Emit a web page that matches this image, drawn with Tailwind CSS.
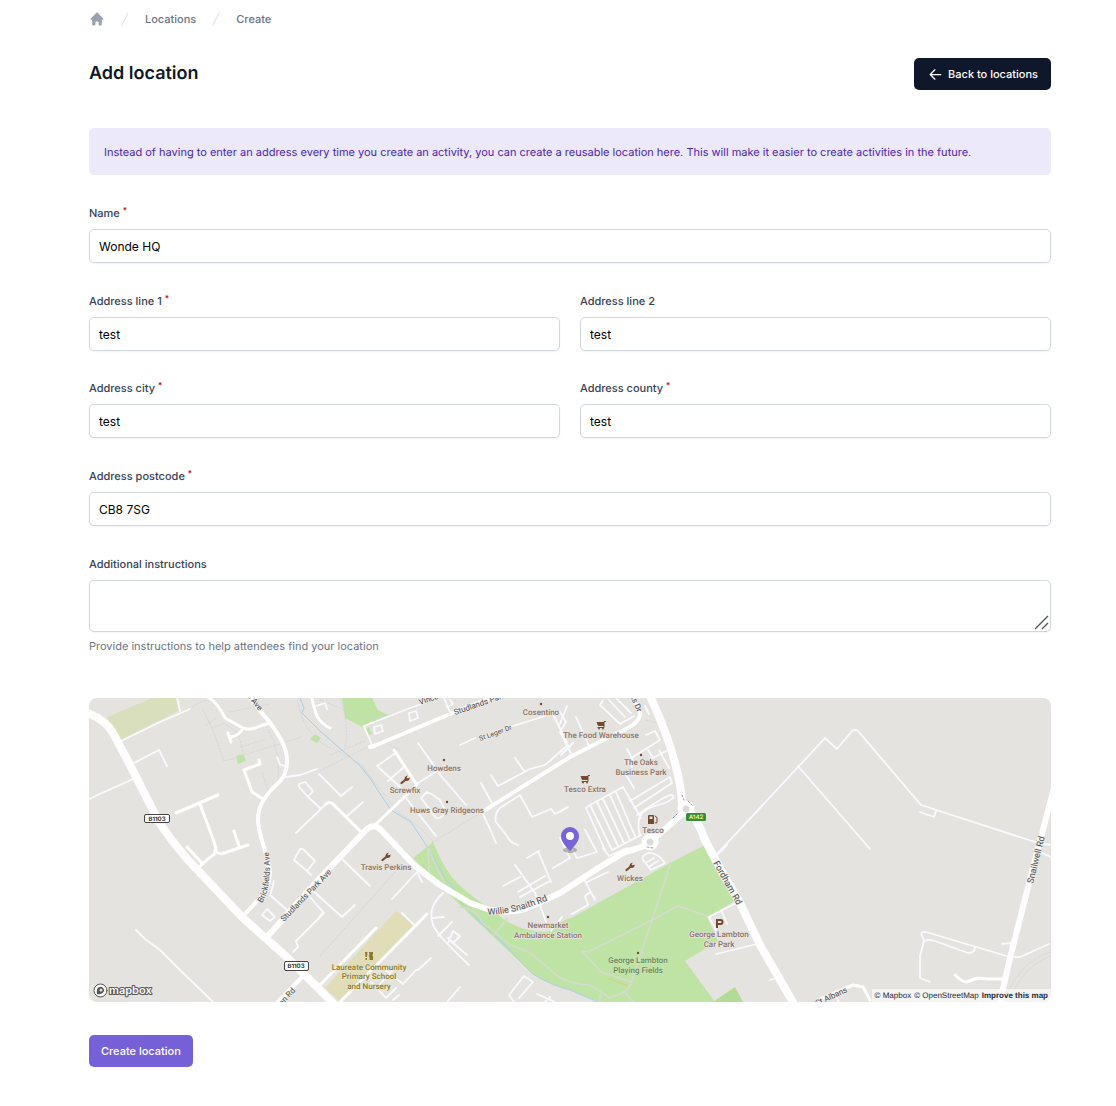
<!DOCTYPE html>
<html lang="en">
<head>
  <meta charset="UTF-8" />
  <meta name="viewport" content="width=device-width, initial-scale=1.0"/>
  <title>Add location</title>
  <script src="https://cdn.jsdelivr.net/npm/@tailwindcss/browser@4"></script>
</head>
<body class="bg-white font-['Inter',sans-serif] text-[11px] leading-4 text-gray-700 antialiased [text-rendering:geometricPrecision]">

  <main class="ml-[89px] mr-[65px] pt-[11px] pb-10">

    <!-- Breadcrumbs -->
    <nav aria-label="Breadcrumb">
      <ol class="flex items-center gap-3 font-medium text-gray-500">
        <li>
          <a href="#" aria-label="Home" class="block text-gray-400">
            <svg class="size-4" viewBox="0 0 20 20" fill="currentColor"><path fill-rule="evenodd" clip-rule="evenodd" d="M9.293 2.293a1 1 0 011.414 0l7 7A1 1 0 0117 11h-1v6a1 1 0 01-1 1h-2a1 1 0 01-1-1v-3a1 1 0 00-1-1H9a1 1 0 00-1 1v3a1 1 0 01-1 1H5a1 1 0 01-1-1v-6H3a1 1 0 01-.707-1.707l7-7z"/></svg>
          </a>
        </li>
        <li class="flex items-center gap-3">
          <svg class="size-4 text-gray-300" viewBox="0 0 20 20" fill="currentColor"><path d="M5.555 17.776l8-16 .894.448-8 16-.894-.448z"/></svg>
          <a href="#">Locations</a>
        </li>
        <li class="flex items-center gap-3">
          <svg class="size-4 text-gray-300" viewBox="0 0 20 20" fill="currentColor"><path d="M5.555 17.776l8-16 .894.448-8 16-.894-.448z"/></svg>
          <a href="#">Create</a>
        </li>
      </ol>
    </nav>

    <!-- Heading -->
    <header class="mt-[31px] flex items-center justify-between">
      <h1 class="text-lg font-semibold text-gray-900">Add location</h1>
      <a href="#" class="flex h-8 items-center gap-[5px] rounded-[5px] bg-[#0f172a] pl-[14px] pr-[13px] font-medium text-white">
        <svg class="size-[15px]" viewBox="0 0 24 24" fill="none" stroke="currentColor" stroke-width="2" stroke-linecap="round" stroke-linejoin="round"><path d="M11 19.500L3.500 12L11 4.500M3.500 12H20.500"/></svg>
        Back to locations
      </a>
    </header>

    <p class="mt-[38px] rounded-[5px] bg-[#ece9fa] px-[15px] pt-[17px] pb-[15px] leading-[15px] text-[#4c25b0]">
      Instead of having to enter an address every time you create an activity, you can create a reusable location here. This will make it easier to create activities in the future.
    </p>

    <form class="mt-[30px]">
      <div class="space-y-[30px]">
        <div>
          <label for="name" class="block font-medium">Name <sup class="text-red-700">*</sup></label>
          <input id="name" type="text" value="Wonde HQ" class="mt-2 h-[34px] w-full rounded-[5px] border border-gray-300 px-[9px] text-xs text-black shadow-xs">
        </div>

        <div class="grid grid-cols-2 gap-x-5 gap-y-[29px]">
          <div>
            <label for="line1" class="block font-medium">Address line 1 <sup class="text-red-700">*</sup></label>
            <input id="line1" type="text" value="test" class="mt-2 h-[34px] w-full rounded-[5px] border border-gray-300 px-[9px] text-xs text-black shadow-xs">
          </div>
          <div>
            <label for="line2" class="block font-medium">Address line 2</label>
            <input id="line2" type="text" value="test" class="mt-2 h-[34px] w-full rounded-[5px] border border-gray-300 px-[9px] text-xs text-black shadow-xs">
          </div>
          <div>
            <label for="city" class="block font-medium">Address city <sup class="text-red-700">*</sup></label>
            <input id="city" type="text" value="test" class="mt-2 h-[34px] w-full rounded-[5px] border border-gray-300 px-[9px] text-xs text-black shadow-xs">
          </div>
          <div>
            <label for="county" class="block font-medium">Address county <sup class="text-red-700">*</sup></label>
            <input id="county" type="text" value="test" class="mt-2 h-[34px] w-full rounded-[5px] border border-gray-300 px-[9px] text-xs text-black shadow-xs">
          </div>
        </div>

        <div>
          <label for="postcode" class="block font-medium">Address postcode <sup class="text-red-700">*</sup></label>
          <input id="postcode" type="text" value="CB8 7SG" class="mt-2 h-[34px] w-full rounded-[5px] border border-gray-300 px-[9px] text-xs text-black shadow-xs">
        </div>

        <div>
          <label for="instructions" class="block font-medium">Additional instructions</label>
          <div class="relative mt-2">
            <textarea id="instructions" class="block h-[52px] w-full resize-none rounded-[5px] border border-gray-300 px-[9px] py-2 text-xs text-black shadow-xs"></textarea>
            <svg class="pointer-events-none absolute right-0.5 bottom-0.5 size-[15px]" viewBox="0 0 15 15" stroke="#555" stroke-width="1.4"><path d="M1 14L14 1M8 14l6-6"/></svg>
          </div>
          <p class="mt-[6px] text-gray-500">Provide instructions to help attendees find your location</p>
        </div>
      </div>

      <!-- Map -->
      <div class="relative mt-11 overflow-hidden rounded-lg bg-[#e4e3df]">
        <svg class="block w-full" viewBox="89 698 962 304" fill="none" stroke-linejoin="round" stroke-linecap="round">
          <!-- Parks and school grounds -->
          <g>
            <path fill="#d9dfbc" d="M107 717L152 698H177L180 710L118 741Z"/>
            <path fill="#e2ddb9" d="M325 988L396 911L414 925L341 1002Z"/>
            <path fill="#bfe3a5" d="M342 698H372L378 710L388 715L362 727L345 718ZM236 756L243 754L246 761L238 764ZM310 739L315 734L321 738L317 743ZM365 729l4-2 3 7-4 1Z"/>
            <path fill="#bfe3a5" d="M433 842Q441 862 451 876Q461 889 485 905L506 921Q527 933 548 932Q558 922 573 917L670 863L705 845L735 901L707 917L718 941L685 961L715 1002H600L570 990Q545 982 533 974L500 943L461 906L413 858Z"/>
            <path fill="#b2db97" d="M713 1002L735 987L743 1002Z"/>
          </g>

          <!-- River -->
          <path stroke="#a6d0e8" d="M300 698L304 708L302 713L320 731L350 757Q362 766 370 778Q380 794 391 810L411 822L428 848L445 878L455 890L461 902L480 922L500 940L533 974Q550 985 570 990L598 1002"/>

          <!-- Footpaths -->
          <g stroke="#d3d3d9" stroke-dasharray="1 2">
            <path d="M190 709Q200 700 212 700M203 710L213 730L224 761L235 758M212 728l12-5 14 10 6 22 58-18M240 747l24-7M216 718l-10 7M298 703Q305 740 340 752L362 765Q380 790 398 812Q420 825 433 842M320 771Q350 755 372 745M320 700l50 20 45-12M340 698q10 30 5 48M268 730q12 20 10 50M330 755l35-14M230 712l40-8M380 740l20 10M262 773l8 22M433 842L482 812M320 956L395 872M668 726l-22-6M1003 1000C1018 975 1022 962 1051 952M1007 1000C1022 978 1026 966 1051 956M263 850l-5-32"/>
          </g>
          <g stroke="#d5dbcf" stroke-width="1.6">
            <path d="M670 865L652 920L631 984L625 992L633 1002M582 951L588 952L652 920L678 906L707 916M582 951L601 972L632 982M460 907Q478 910 482 922L510 945Q525 950 533 955L560 978Q572 984 590 985L610 998L625 992M493 936L507 919M600 1002v-8M428 848L429 872M428 848L445 885"/>
          </g>
          <path stroke="#c8d98d" stroke-width="2" d="M609 979L627 985"/>

          <!-- Minor streets -->
          <g stroke="#fafafe" stroke-width="1.8">
            <path d="M177 698L180 711M119 742L160 722L190 709M130 765L159 750L167 766M89 799L133 779M136 930L145 939L160 950L180 970L213 1002M277 757L280 765L286 766M286 777L300 775L317 769"/>
            <path d="M316 706L325 703L327 709M299 787L299 784L305 782L313 791L308 797ZM308 797L320 808M319 774L341 796L352 787M346 817L363 802M296 833L326 804"/>
            <path d="M300 849L303 849L315 861L307 871L294 860ZM307 871l4 4M270 895L287 910M271 893l3-12M262 915L267 909L275 917L270 921ZM308 895L324 913L296 941L298 947L293 952M312 890L342 917L355 905M320 908l3 4-3 4M342 859L370 886M392 899L417 872L422 882M410 860L400 850"/>
            <path d="M364 726L405 710L435 699M364 726L372 745M374 727L381 725L383 731L375 734ZM410 721L409 713L416 711L418 718L410 721M444 698L450 712M450 700l3 4-6 3"/>
            <path d="M460 745L475 738M513 726L545 716M553 714L567 743M567 706L560 724M397 752L377 766L400 787M388 781L404 767M418 783L445 766M427 792L421 798L436 818Q440 820 446 812L440 800L433 795ZM406 798L436 836M418 743L442 777L466 805"/>
            <path d="M482 812L490 829L496 843M481 783L493 805M518 845Q510 843 507 836L496 822Q494 814 500 808L520 795L532 817L551 809L555 814L566 808M491 775L498 786L530 769L545 765L560 752L568 745M515 758L524 771"/>
            <path d="M443 893C430 905 430 915 433 925C438 935 448 945 469 965M432 918L444 917M438 936L452 922M448 943L453 931L460 936L453 943L448 938M453 943L467 955M402 913L414 925M403 984L416 970L418 970L431 958M386 970L403 984M447 1002L460 987M514 1002L509 995L524 976L533 982L519 998M537 994L555 1002M545 1002l5-5M380 984L393 970M371 982L386 998L396 988M393 1000l6-5"/>
            <path d="M515 865L535 893L540 905L546 922M503 886L520 877M518 892L545 876M520 897L550 881M538 851L551 882M527 858l12-7M553 868L570 858L560 838M577 858L570 845M577 858L597 852L585 830M603 848l6 8 18-8M551 931L562 917"/>
            <path d="M583 877L595 900M587 882L608 872M572 914L588 905L585 896L590 892L595 898M643 860Q641 856 648 853Q657 852 665 863L651 870ZM647 862l7-4M650 866l8-5"/>
            <path d="M603 700L600 705L620 724L634 716M609 700L625 717M616 698L631 713M560 712L566 722L560 732L573 757M576 717L590 748M561 755l12-12M646 735L655 731L660 740L628 760L632 767M627 749L634 762M648 750L653 758L668 750M659 750L669 768M645 706l4 8M626 775l8 13"/>
            <path d="M641 835L612 850L590 805L586 808L605 850M590 805L623 787L641 818M597 802L618 846M603 799L624 843M610 795L630 840M616 792L635 836M630 801L670 777L672 783L634 808M640 836C634 812 645 808 665 803Q677 797 672 795Q668 794 637 815M560 812l8-5M727 845L717 855"/>
            <path d="M717 854L800 765L825 738L837 749L852 731Q855 729 858 731L921 805L1035 842L1051 845M798 766L870 849M936 811L934 817L920 812M1040 852L1051 857M1010 957L926 932Q920 931 922 936L924 941L920 956V978L930 982M924 941Q928 939 935 941L968 953Q975 953 975 947M1002 944L1011 943M1010 957H1020L1049 944"/>
            <path d="M709 917L738 902M709 917L716 930M722 912l5 12M716 954L757 944M770 980l6-2M835 995l4 7"/>
          </g>

          <!-- Streets -->
          <g stroke="#fff" stroke-width="3">
            <path d="M176 813L218 795M200 804C205 818 212 835 215 845Q218 854 209 858L197 869M248 845L224 853Q219 855 215 851M234 831L239 846M187 847L202 863M209 698Q217 702 225 718L243 728Q250 731 260 726L270 723M243 728Q240 736 230 737M228 733L231 742M263 799L252 792L244 770L260 764L259 760M312 698C315 715 318 722 330 728"/>
            <path d="M326 804Q329 801 333 804L362 833M394 750L417 785L375 825M320 985L376 928M340 1002L427 914M955 975Q962 982 967 982L977 978L988 979L1003 979M818 1000L853 985L863 987L870 1000"/>
          </g>
          <g stroke="#fff" stroke-width="4">
            <path d="M370 747L374 746L450 714L500 694M250 698L262 713C275 728 287 745 287 760C287 775 282 780 273 788C262 800 258 808 258 820C258 832 264 845 268 862Q274 882 260 898L243 916M482 812L570 757L613 735Q642 724 640 712L633 698M303 976L278 1002"/>
          </g>

          <!-- Main roads -->
          <g stroke="#fff" stroke-width="6">
            <path d="M266 938L320 878L366 830Q374 822 382 831L415 866L440 885L470 903L490 910Q515 914 530 907L560 893L600 867L625 852Q640 848 648 844L680 816"/>
            <path d="M1053 792L1035 860L1010 958L1000 1002"/>
          </g>
          <g stroke="#fff" stroke-width="8">
            <path d="M86 712Q106 720 113 733L130 765L158 820Q166 834 188 860L243 918L290 960L334 1004"/>
            <path d="M650 696C668 735 680 770 682 803C692 812 700 825 705 840L722 872L740 903L760 945L794 1004"/>
          </g>
          <g stroke="#fff" stroke-width="5" fill="#dddcd9">
            <circle cx="686" cy="809" r="6"/>
            <circle cx="650" cy="842" r="6"/>
          </g>
          <path stroke="#9a9ab5" stroke-dasharray="2 2" d="M682 795l2 5M688 801l5 5M673 818l4-4M647 847l6 1"/>

          <!-- Road names -->
          <defs>
            <path id="road-brickfields" d="M262 903Q272 888 269 852"/>
            <path id="road-willie" d="M488 915Q515 914 551 899"/>
            <path id="road-fordham" d="M713 863L739 909"/>
          </defs>
          <g fill="#4b4b4b" stroke="#eeedeb" stroke-width="1.5" paint-order="stroke" font-family="Roboto, sans-serif" font-size="8">
            <text><textPath href="#road-brickfields">Brickfields Ave</textPath></text>
            <text font-size="9"><textPath href="#road-willie">Willie Snaith Rd</textPath></text>
            <text font-size="9"><textPath href="#road-fordham">Fordham Rd</textPath></text>
            <text font-size="9" transform="translate(1033 884) rotate(-76)">Snailwell Rd</text>
            <text transform="translate(284 922) rotate(-46)">Studlands Park Ave</text>
            <text transform="translate(455 715) rotate(-19)">Studlands Park</text>
            <text transform="translate(420 705) rotate(-19)">Vincent</text>
            <text font-size="7" transform="translate(480 741) rotate(-20)">St Leger Dr</text>
            <text transform="translate(247 696) rotate(52)">s Ave</text>
            <text transform="translate(630 696) rotate(66)">ks Dr</text>
            <text transform="translate(282 1006) rotate(-48)">on Rd</text>
            <text transform="translate(817 1006) rotate(-25)">St Albans</text>
          </g>

          <!-- Road shields -->
          <g font-family="Inter, sans-serif" font-size="6" font-weight="700" text-anchor="middle">
            <rect x="144.500" y="814.500" width="25" height="8" rx="1.500" fill="#fff" stroke="#444"/>
            <text x="157" y="821" fill="#333">B1103</text>
            <rect x="284.500" y="961.500" width="24" height="9" rx="1.500" fill="#fff" stroke="#444"/>
            <text x="296" y="968" fill="#333">B1103</text>
            <rect x="686" y="813" width="20" height="8" rx="1.500" fill="#2f8f3e"/>
            <text x="696" y="819" fill="#ece87c">A142</text>
          </g>

          <!-- Places -->
          <g fill="#8a7466" stroke="#eae8e5" stroke-width="1.500" paint-order="stroke" font-family="Roboto, sans-serif" font-size="8" font-weight="500" text-anchor="middle">
            <text x="541" y="715">Cosentino</text>
            <text x="601" y="738">The Food Warehouse</text>
            <text x="641" y="765">The Oaks</text>
            <text x="641" y="775">Business Park</text>
            <text x="585" y="792">Tesco Extra</text>
            <text x="444" y="771">Howdens</text>
            <text x="405" y="793">Screwfix</text>
            <text x="447" y="813">Huws Gray Ridgeons</text>
            <text x="653" y="833">Tesco</text>
            <text x="386" y="870">Travis Perkins</text>
            <text x="630" y="881">Wickes</text>
            <text x="548" y="928">Newmarket</text>
            <text x="548" y="938">Ambulance Station</text>
            <text x="719" y="937">George Lambton</text>
            <text x="719" y="947">Car Park</text>
          </g>
          <g fill="#6a8559" stroke="#cdeab9" stroke-width="1" paint-order="stroke" font-family="Roboto, sans-serif" font-size="8" font-weight="500" text-anchor="middle">
            <text x="638" y="963">George Lambton</text>
            <text x="638" y="973">Playing Fields</text>
          </g>
          <g fill="#8a7a2c" stroke="#efebd0" stroke-width="1" paint-order="stroke" font-family="Roboto, sans-serif" font-size="8" font-weight="500" text-anchor="middle">
            <text x="369" y="970">Laureate Community</text>
            <text x="369" y="979">Primary School</text>
            <text x="369" y="989">and Nursery</text>
          </g>

          <!-- Place icons -->
          <defs>
            <g id="wrench">
              <path stroke="#74492d" stroke-width="2.200" d="M-3.500 3L1.500 -1"/>
              <path fill="#74492d" d="M3 -4.500L1.500 -2.500L2.500 -1.500L4.500 -2.500Q5 .5 2 1Q0 1 -.5 -1Q-.5 -4 3 -4.500Z"/>
            </g>
            <g id="cart">
              <path fill="#74492d" d="M-4.500 -3H3V1H-3Z"/>
              <path stroke="#74492d" d="M4.500 -3.500H3V2.500H-3"/>
              <circle cx="-2" cy="3.500" r=".9" fill="#74492d"/>
              <circle cx="2" cy="3.500" r=".9" fill="#74492d"/>
            </g>
          </defs>
          <use href="#wrench" x="405" y="780"/>
          <use href="#wrench" x="386" y="857"/>
          <use href="#wrench" x="630" y="867"/>
          <use href="#cart" x="601" y="725"/>
          <use href="#cart" x="585" y="779"/>
          <g fill="#74492d">
            <circle cx="541" cy="704" r="1.200"/>
            <circle cx="641" cy="755" r="1.200"/>
            <circle cx="444" cy="760" r="1.200"/>
            <circle cx="447" cy="802" r="1.200"/>
            <circle cx="548" cy="917" r="1.200"/>
            <circle cx="638" cy="953" r="1.200"/>
            <path fill-rule="evenodd" d="M648 816q0-1 1-1h4q1 0 1 1v8h-6ZM649.500 816.500v2.500h3v-2.500Z"/>
            <path fill-rule="evenodd" d="M716 919h4.500a3 3 0 010 6H718v3h-2ZM718 921v2h2.500a1 1 0 000-2Z"/>
          </g>
          <path stroke="#74492d" d="M655 816l2 1.500v5q-1 1.500-2 0"/>
          <path fill="#8a7a2c" d="M365 952h2.500l-.5 5h-1.500ZM365.500 958h1.500v2h-1.500ZM369 952h4v2.500l-1 .5 1 1v4h-3.500v-3l-1-1 1-1Z"/>

          <!-- Marker -->
          <ellipse cx="570" cy="850" rx="7" ry="3" fill="#000" fill-opacity=".25"/>
          <path fill="#7a63d9" d="M570 851C566 846 561 842 561 836A9 9 0 01579 836C579 842 574 846 570 851Z"/>
          <circle cx="570" cy="836" r="4" fill="#fff"/>

          <!-- Mapbox logo -->
          <circle cx="100.500" cy="990.500" r="6.500" fill="#fff" stroke="#555"/>
          <path fill="#555" d="M97 994Q96 988 99.500 987A3.500 3.500 0 01104 991Q102 995 97 994Z"/>
          <path fill="#fff" d="M101 988l.7 1.500 1.500.6-1.500.7-.7 1.500-.7-1.500-1.500-.7 1.500-.6Z"/>
          <text x="109" y="994" fill="#fff" stroke="#555" stroke-width="2" paint-order="stroke" font-family="Inter, sans-serif" font-size="11" font-weight="600">mapbox</text>
        </svg>
        <div class="absolute right-0 bottom-0 flex gap-[3px] bg-white/60 px-[3px] font-['Liberation_Sans',sans-serif] text-[8px] leading-[13px] text-gray-800">
          <a href="#">© Mapbox</a>
          <a href="#">© OpenStreetMap</a>
          <a href="#" class="font-bold">Improve this map</a>
        </div>
      </div>

      <button type="submit" class="mt-[33px] h-8 rounded-[5px] bg-[#7660d8] px-3 font-medium text-white">Create location</button>
    </form>
  </main>

</body>
</html>
